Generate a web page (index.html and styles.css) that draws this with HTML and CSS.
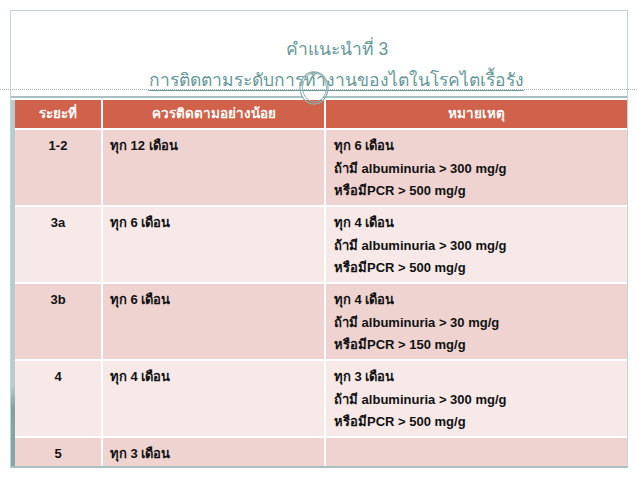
FILE: index.html
```
<!DOCTYPE html>
<html lang="th">
<head>
<meta charset="utf-8">
<link rel="stylesheet" href="styles.css">
</head>
<body>
<div class="slide">
  <div class="head">
    <div class="t1">คำแนะนำที่ 3</div>
    <div class="t2">การติดตามระดับการทำงานของไตในโรคไตเรื้อรัง</div>
  </div>
  <div class="dots"></div>
  <div class="rule">
    <svg class="ring" width="36" height="38" viewBox="0 0 36 38">
      <ellipse cx="18" cy="19" rx="14" ry="16" fill="none" stroke="#8fb0b0" stroke-width="1.3"/>
      <ellipse cx="18.5" cy="18.5" rx="12" ry="14.5" fill="none" stroke="#8fb0b0" stroke-width="1"/>
    </svg>
  </div>
  <div class="body">
    <div class="band"></div>
    <div class="table">
      <div class="row hdr">
        <div class="c1">ระยะที่</div>
        <div class="c2">ควรติดตามอย่างน้อย</div>
        <div class="c3">หมายเหตุ</div>
      </div>
      <div class="row dark">
        <div class="c1">1-2</div>
        <div class="c2">ทุก 12 เดือน</div>
        <div class="c3">ทุก 6 เดือน<br>ถ้ามี albuminuria &gt; 300 mg/g<br>หรือมีPCR &gt; 500 mg/g</div>
      </div>
      <div class="row light">
        <div class="c1">3a</div>
        <div class="c2">ทุก 6 เดือน</div>
        <div class="c3">ทุก 4 เดือน<br>ถ้ามี albuminuria &gt; 300 mg/g<br>หรือมีPCR &gt; 500 mg/g</div>
      </div>
      <div class="row dark">
        <div class="c1">3b</div>
        <div class="c2">ทุก 6 เดือน</div>
        <div class="c3">ทุก 4 เดือน<br>ถ้ามี albuminuria &gt; 30 mg/g<br>หรือมีPCR &gt; 150 mg/g</div>
      </div>
      <div class="row light">
        <div class="c1">4</div>
        <div class="c2">ทุก 4 เดือน</div>
        <div class="c3">ทุก 3 เดือน<br>ถ้ามี albuminuria &gt; 300 mg/g<br>หรือมีPCR &gt; 500 mg/g</div>
      </div>
      <div class="row dark short">
        <div class="c1">5</div>
        <div class="c2">ทุก 3 เดือน</div>
        <div class="c3"></div>
      </div>
    </div>
  </div>
</div>
</body>
</html>
```
FILE: styles.css
```
html, body {
  margin: 0;
  padding: 0;
  background: #ffffff;
}
body {
  font-family: "Liberation Sans", "DejaVu Sans", "Noto Sans", sans-serif;
  width: 638px;
  height: 478px;
  overflow: hidden;
}
.slide {
  margin: 10px 0 0 10px;
  width: 616px;
  border: 1px solid #c3d4d4;
  border-bottom: 2px solid #a9c0c0;
}
.head {
  height: 78px;
  box-sizing: border-box;
  padding-top: 26px;
  padding-left: 34px;
  text-align: center;
  color: #669797;
  font-size: 17.5px;
}
.t1 {
  line-height: 24px;
  padding-left: 2px;
}
.t2 {
  margin-top: 8px;
  line-height: 22px;
  text-decoration: underline;
  text-decoration-thickness: 1px;
  text-underline-offset: 4px;
}
.dots {
  margin: 0 -12px;
  border-top: 1px dotted #a6b8b8;
}
.rule {
  position: relative;
  margin-top: 6px;
  height: 2px;
  background: linear-gradient(to right, #a9c0c0 0, #a9c0c0 292px, transparent 292px, transparent 312px, #a9c0c0 312px);
}
.ring {
  position: absolute;
  left: 285px;
  top: -27px;
}
.body {
  display: flex;
  margin-top: 2px;
}
.band {
  width: 4px;
  background: linear-gradient(to bottom, #b7cdcd 0, #b7cdcd 78%, #7fa3a3 84%, #86a8a8 100%);
}
.table {
  flex: 1;
  display: flex;
  flex-direction: column;
  gap: 2px;
  background: #ffffff;
  font-size: 13px;
  font-weight: bold;
  color: #111111;
}
.row {
  display: flex;
  gap: 2px;
  height: 75px;
}
.row > div {
  box-sizing: border-box;
  padding-top: 5px;
  line-height: 22.5px;
}
.c1 {
  width: 86px;
  text-align: center;
}
.c2 {
  width: 221px;
  padding-left: 7px;
}
.c3 {
  flex: 1;
  padding-left: 8px;
}
.hdr {
  height: 28px;
}
.hdr > div {
  background: #d0624b;
  color: #ffffff;
  text-align: center;
  padding: 0;
  line-height: 28px;
  font-size: 13.5px;
}
.dark > div {
  background: #efd3d0;
}
.light > div {
  background: #f7e9e8;
}
.short {
  height: 28px;
}
```
